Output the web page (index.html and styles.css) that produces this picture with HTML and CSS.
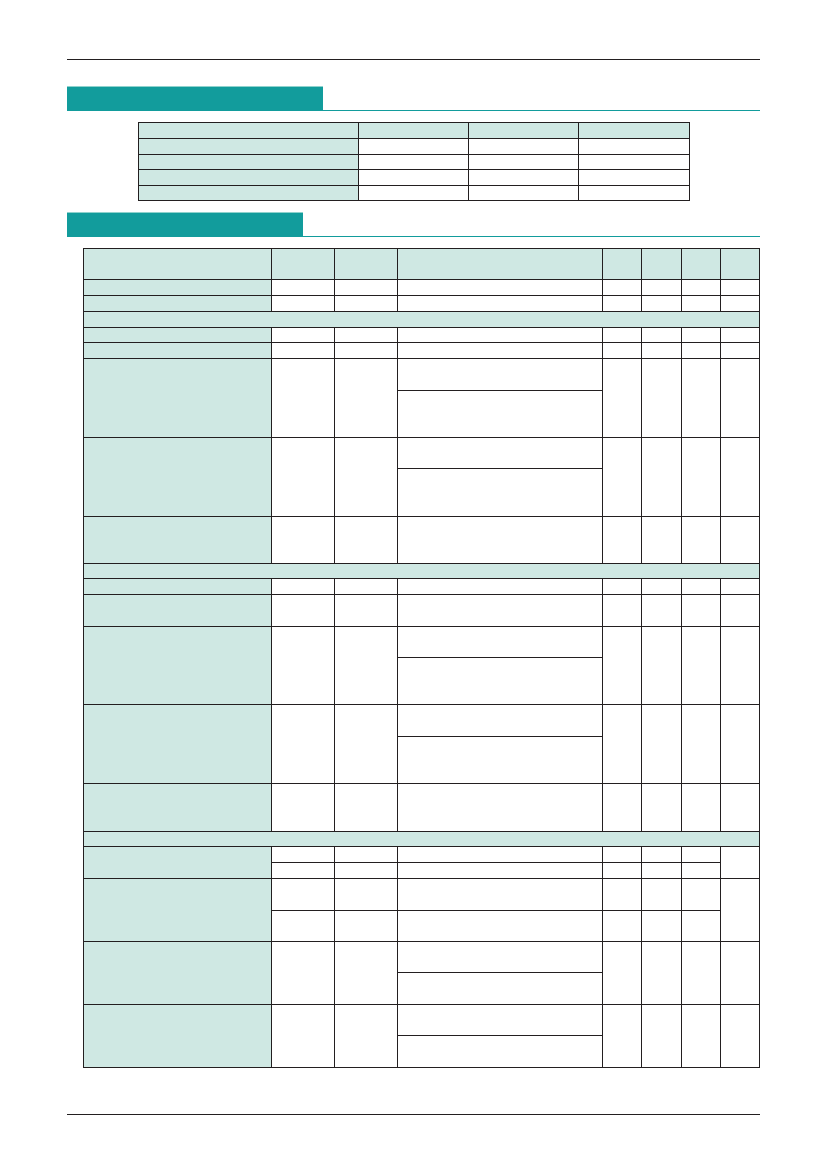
FILE: index.html
```html
<!DOCTYPE html>
<html lang="en">
<head>
<meta charset="utf-8">
<title>Datasheet page</title>
<link rel="stylesheet" href="styles.css">
</head>
<body>
<div class="page">
  <div class="rule"></div>

  <div class="band-row band-row-first">
    <div class="band band-wide"></div>
    <div class="band-line"></div>
  </div>

  <div class="grid table1">
    <div class="c t"></div><div class="c t"></div><div class="c t"></div><div class="c t"></div>
    <div class="c t"></div><div class="c"></div><div class="c"></div><div class="c"></div>
    <div class="c t"></div><div class="c"></div><div class="c"></div><div class="c"></div>
    <div class="c t"></div><div class="c"></div><div class="c"></div><div class="c"></div>
    <div class="c t"></div><div class="c"></div><div class="c"></div><div class="c"></div>
  </div>

  <div class="band-row">
    <div class="band band-narrow"></div>
    <div class="band-line"></div>
  </div>

  <div class="grid table2">
    <!-- header -->
    <div class="c t"></div><div class="c t"></div><div class="c t"></div><div class="c t"></div><div class="c t"></div><div class="c t"></div><div class="c t"></div><div class="c t"></div>
    <!-- rows -->
    <div class="c t"></div><div class="c"></div><div class="c"></div><div class="c"></div><div class="c"></div><div class="c"></div><div class="c"></div><div class="c"></div>
    <div class="c t"></div><div class="c"></div><div class="c"></div><div class="c"></div><div class="c"></div><div class="c"></div><div class="c"></div><div class="c"></div>
    <!-- section -->
    <div class="c t sec"></div>
    <div class="c t"></div><div class="c"></div><div class="c"></div><div class="c"></div><div class="c"></div><div class="c"></div><div class="c"></div><div class="c"></div>
    <div class="c t"></div><div class="c"></div><div class="c"></div><div class="c"></div><div class="c"></div><div class="c"></div><div class="c"></div><div class="c"></div>
    <!-- split condition -->
    <div class="c t r2"></div><div class="c r2"></div><div class="c r2"></div><div class="c"></div><div class="c r2"></div><div class="c r2"></div><div class="c r2"></div><div class="c r2"></div>
    <div class="c"></div>
    <div class="c t r2"></div><div class="c r2"></div><div class="c r2"></div><div class="c"></div><div class="c r2"></div><div class="c r2"></div><div class="c r2"></div><div class="c r2"></div>
    <div class="c"></div>
    <div class="c t"></div><div class="c"></div><div class="c"></div><div class="c"></div><div class="c"></div><div class="c"></div><div class="c"></div><div class="c"></div>
    <!-- section -->
    <div class="c t sec"></div>
    <div class="c t"></div><div class="c"></div><div class="c"></div><div class="c"></div><div class="c"></div><div class="c"></div><div class="c"></div><div class="c"></div>
    <div class="c t"></div><div class="c"></div><div class="c"></div><div class="c"></div><div class="c"></div><div class="c"></div><div class="c"></div><div class="c"></div>
    <div class="c t r2"></div><div class="c r2"></div><div class="c r2"></div><div class="c"></div><div class="c r2"></div><div class="c r2"></div><div class="c r2"></div><div class="c r2"></div>
    <div class="c"></div>
    <div class="c t r2"></div><div class="c r2"></div><div class="c r2"></div><div class="c"></div><div class="c r2"></div><div class="c r2"></div><div class="c r2"></div><div class="c r2"></div>
    <div class="c"></div>
    <div class="c t"></div><div class="c"></div><div class="c"></div><div class="c"></div><div class="c"></div><div class="c"></div><div class="c"></div><div class="c"></div>
    <!-- section -->
    <div class="c t sec"></div>
    <!-- split multi -->
    <div class="c t r2"></div><div class="c"></div><div class="c"></div><div class="c"></div><div class="c"></div><div class="c"></div><div class="c"></div><div class="c r2"></div>
    <div class="c"></div><div class="c"></div><div class="c"></div><div class="c"></div><div class="c"></div><div class="c"></div>
    <div class="c t r2"></div><div class="c"></div><div class="c"></div><div class="c"></div><div class="c"></div><div class="c"></div><div class="c"></div><div class="c r2"></div>
    <div class="c"></div><div class="c"></div><div class="c"></div><div class="c"></div><div class="c"></div><div class="c"></div>
    <!-- split condition -->
    <div class="c t r2"></div><div class="c r2"></div><div class="c r2"></div><div class="c"></div><div class="c r2"></div><div class="c r2"></div><div class="c r2"></div><div class="c r2"></div>
    <div class="c"></div>
    <div class="c t r2"></div><div class="c r2"></div><div class="c r2"></div><div class="c"></div><div class="c r2"></div><div class="c r2"></div><div class="c r2"></div><div class="c r2"></div>
    <div class="c"></div>
  </div>

  <div class="rule rule-bottom"></div>
</div>
</body>
</html>
```

FILE: styles.css
```css
html, body {
  margin: 0;
  padding: 0;
  background: #ffffff;
  font-family: "Liberation Sans", Arial, sans-serif;
}

.page {
  width: 693px;
  margin-left: 67px;
  padding-top: 59px;
}

.rule {
  height: 1px;
  background: #231f20;
}

.rule-bottom {
  margin-top: 46px;
}

.band-row {
  display: flex;
  align-items: flex-end;
  margin-top: 11px;
}

.band-row-first {
  margin-top: 26px;
}

.band {
  height: 24px;
  background: #129c9c;
  border-top: 1px solid #8fd2cd;
}

.band-wide {
  width: 256px;
}

.band-narrow {
  width: 236px;
}

.band-line {
  flex: 1;
  height: 1px;
  background: #129c9c;
}

.grid {
  display: grid;
  gap: 1px;
  padding: 1px;
  background: #231f20;
  margin-top: 11px;
}

.c {
  background: #ffffff;
}

.t {
  background: #cfe8e3;
}

.r2 {
  grid-row: span 2;
}

.sec {
  grid-column: 1 / -1;
}

.table1 {
  width: 550px;
  margin-left: 71px;
  grid-template-columns: 219px 109px 109px 110px;
  grid-template-rows: 15px 15px 14px 15px 14px;
}

.table2 {
  margin-left: 16px;
  grid-template-columns: 187px 62px 62px 204px 38px 39px 38px 38px;
  grid-template-rows:
    30px 15px 15px 15px 14px 15px
    31px 46px 30px 47px
    46px 14px 15px 31px
    30px 46px 31px 46px
    47px 14px
    15px 15px 31px 30px
    30px 31px 30px 31px;
}
```
